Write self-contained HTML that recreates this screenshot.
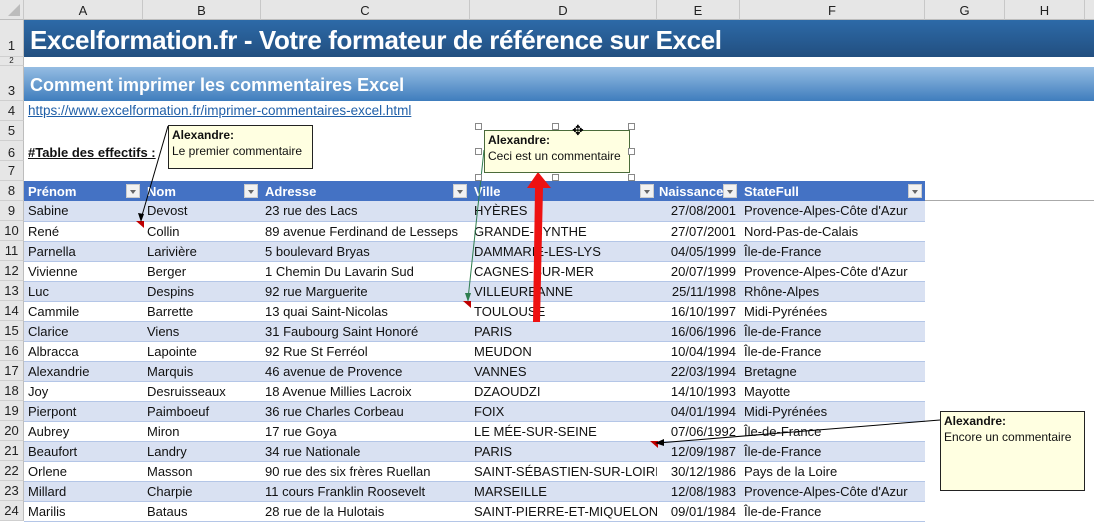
<!DOCTYPE html>
<html><head><meta charset="utf-8"><style>
*{margin:0;padding:0;box-sizing:border-box}
body{width:1094px;height:509px;overflow:hidden;background:#fff;font-family:"Liberation Sans",sans-serif;position:relative}
.ab{position:absolute}
.colh{position:absolute;top:0;height:20px;background:#e6e6e6;border-right:1px solid #c8c8c8;border-bottom:1px solid #bdbdbd;font-size:13px;color:#222;text-align:center;line-height:21px}
.rowh{position:absolute;left:0;width:24px;background:#e6e6e6;border-right:1px solid #bdbdbd;border-bottom:1px solid #cfcfcf;font-size:13px;color:#222;text-align:center}
table{position:absolute;left:24px;top:181px;width:901px;border-collapse:collapse;table-layout:fixed;font-size:13px;color:#111}
td{height:20px;padding:0 0 0 4px;white-space:nowrap;overflow:hidden;border-bottom:1px solid #b4c6e7;position:relative;line-height:19px}
tr.h td{background:#4472c4;color:#fff;font-weight:bold;border-bottom:none}
tr.o td{background:#d9e1f2}
td.r{text-align:right;padding-right:4px}
.dd{position:absolute;right:3px;top:3px;width:14px;height:14px;background:#f2f2f2;border:1px solid #ccc}
.dd:after{content:"";position:absolute;left:3px;top:5px;border-left:3.5px solid transparent;border-right:3.5px solid transparent;border-top:4px solid #666}
.cm{position:absolute;background:#ffffe1;border:1px solid #222;font-size:12px;padding:1px 3px;color:#111;line-height:16px}
.hd{position:absolute;width:7px;height:7px;border:1px solid #888;background:#fff}
</style></head><body>
<div class="colh" style="left:0;width:24px"><div style="position:absolute;right:3px;bottom:3px;border-left:12px solid transparent;border-bottom:12px solid #bcbcbc"></div></div>
<div class="colh" style="left:24px;width:119px">A</div>
<div class="colh" style="left:143px;width:118px">B</div>
<div class="colh" style="left:261px;width:209px">C</div>
<div class="colh" style="left:470px;width:187px">D</div>
<div class="colh" style="left:657px;width:83px">E</div>
<div class="colh" style="left:740px;width:185px">F</div>
<div class="colh" style="left:925px;width:80px">G</div>
<div class="colh" style="left:1005px;width:80px">H</div>
<div class="colh" style="left:1085px;width:20px"></div>

<div class="rowh" style="top:20px;height:37px;line-height:52px">1</div>
<div class="rowh" style="top:57px;height:9px;font-size:8px;line-height:8px">2</div>
<div class="rowh" style="top:66px;height:35px;line-height:50px">3</div>
<div class="rowh" style="top:101px;height:20px;line-height:20px">4</div>
<div class="rowh" style="top:121px;height:20px;line-height:20px">5</div>
<div class="rowh" style="top:141px;height:20px;line-height:24px">6</div>
<div class="rowh" style="top:161px;height:20px;line-height:20px">7</div>
<div class="rowh" style="top:181px;height:20px;line-height:20px">8</div>
<div class="rowh" style="top:201px;height:20px;line-height:20px">9</div>
<div class="rowh" style="top:221px;height:20px;line-height:20px">10</div>
<div class="rowh" style="top:241px;height:20px;line-height:20px">11</div>
<div class="rowh" style="top:261px;height:20px;line-height:20px">12</div>
<div class="rowh" style="top:281px;height:20px;line-height:20px">13</div>
<div class="rowh" style="top:301px;height:20px;line-height:20px">14</div>
<div class="rowh" style="top:321px;height:20px;line-height:20px">15</div>
<div class="rowh" style="top:341px;height:20px;line-height:20px">16</div>
<div class="rowh" style="top:361px;height:20px;line-height:20px">17</div>
<div class="rowh" style="top:381px;height:20px;line-height:20px">18</div>
<div class="rowh" style="top:401px;height:20px;line-height:20px">19</div>
<div class="rowh" style="top:421px;height:20px;line-height:20px">20</div>
<div class="rowh" style="top:441px;height:20px;line-height:20px">21</div>
<div class="rowh" style="top:461px;height:20px;line-height:20px">22</div>
<div class="rowh" style="top:481px;height:20px;line-height:20px">23</div>
<div class="rowh" style="top:501px;height:20px;line-height:20px">24</div>

<div class="ab" style="left:24px;top:20px;width:1070px;height:37px;background:linear-gradient(#2d6aa8,#224f80);color:#fff;font-weight:bold;font-size:26px;line-height:40px;padding-left:6px;letter-spacing:-0.4px">Excelformation.fr - Votre formateur de référence sur Excel</div>
<div class="ab" style="left:24px;top:67px;width:1070px;height:34px;background:linear-gradient(#95bde3,#3f7dbd);color:#fff;font-weight:bold;font-size:18px;line-height:36px;padding-left:6px">Comment imprimer les commentaires Excel</div>
<div class="ab" style="left:28px;top:103px;font-size:13.5px;color:#1f5fa8;text-decoration:underline">https://www.excelformation.fr/imprimer-commentaires-excel.html</div>
<div class="ab" style="left:28px;top:145px;font-size:13px;font-weight:bold;text-decoration:underline;color:#111">#Table des effectifs :</div>
<div class="ab" style="left:925px;top:200px;width:169px;height:1px;background:#aaa"></div>

<table>
<colgroup><col style="width:119px"><col style="width:118px"><col style="width:209px"><col style="width:187px"><col style="width:83px"><col style="width:185px"></colgroup>
<tr class="h"><td>Prénom<span class="dd"></span></td><td>Nom<span class="dd"></span></td><td>Adresse<span class="dd"></span></td><td>Ville<span class="dd"></span></td><td style="padding-left:2px">Naissance<span class="dd"></span></td><td>StateFull<span class="dd"></span></td></tr>
<tr class="o"><td>Sabine</td><td>Devost</td><td>23 rue des Lacs</td><td>HYÈRES</td><td class="r">27/08/2001</td><td>Provence-Alpes-Côte d'Azur</td></tr>
<tr><td>René</td><td>Collin</td><td>89 avenue Ferdinand de Lesseps</td><td>GRANDE-SYNTHE</td><td class="r">27/07/2001</td><td>Nord-Pas-de-Calais</td></tr>
<tr class="o"><td>Parnella</td><td>Larivière</td><td>5 boulevard Bryas</td><td>DAMMARIE-LES-LYS</td><td class="r">04/05/1999</td><td>Île-de-France</td></tr>
<tr><td>Vivienne</td><td>Berger</td><td>1 Chemin Du Lavarin Sud</td><td>CAGNES-SUR-MER</td><td class="r">20/07/1999</td><td>Provence-Alpes-Côte d'Azur</td></tr>
<tr class="o"><td>Luc</td><td>Despins</td><td>92 rue Marguerite</td><td>VILLEURBANNE</td><td class="r">25/11/1998</td><td>Rhône-Alpes</td></tr>
<tr><td>Cammile</td><td>Barrette</td><td>13 quai Saint-Nicolas</td><td>TOULOUSE</td><td class="r">16/10/1997</td><td>Midi-Pyrénées</td></tr>
<tr class="o"><td>Clarice</td><td>Viens</td><td>31 Faubourg Saint Honoré</td><td>PARIS</td><td class="r">16/06/1996</td><td>Île-de-France</td></tr>
<tr><td>Albracca</td><td>Lapointe</td><td>92 Rue St Ferréol</td><td>MEUDON</td><td class="r">10/04/1994</td><td>Île-de-France</td></tr>
<tr class="o"><td>Alexandrie</td><td>Marquis</td><td>46 avenue de Provence</td><td>VANNES</td><td class="r">22/03/1994</td><td>Bretagne</td></tr>
<tr><td>Joy</td><td>Desruisseaux</td><td>18 Avenue Millies Lacroix</td><td>DZAOUDZI</td><td class="r">14/10/1993</td><td>Mayotte</td></tr>
<tr class="o"><td>Pierpont</td><td>Paimboeuf</td><td>36 rue Charles Corbeau</td><td>FOIX</td><td class="r">04/01/1994</td><td>Midi-Pyrénées</td></tr>
<tr><td>Aubrey</td><td>Miron</td><td>17 rue Goya</td><td>LE MÉE-SUR-SEINE</td><td class="r">07/06/1992</td><td>Île-de-France</td></tr>
<tr class="o"><td>Beaufort</td><td>Landry</td><td>34 rue Nationale</td><td>PARIS</td><td class="r">12/09/1987</td><td>Île-de-France</td></tr>
<tr><td>Orlene</td><td>Masson</td><td>90 rue des six frères Ruellan</td><td>SAINT-SÉBASTIEN-SUR-LOIRE</td><td class="r">30/12/1986</td><td>Pays de la Loire</td></tr>
<tr class="o"><td>Millard</td><td>Charpie</td><td>11 cours Franklin Roosevelt</td><td>MARSEILLE</td><td class="r">12/08/1983</td><td>Provence-Alpes-Côte d'Azur</td></tr>
<tr><td>Marilis</td><td>Bataus</td><td>28 rue de la Hulotais</td><td>SAINT-PIERRE-ET-MIQUELON</td><td class="r">09/01/1984</td><td>Île-de-France</td></tr>
</table>

<svg class="ab" style="left:0;top:0" width="1094" height="509">
<polygon points="136,221 144,221 144,228" fill="#c00000"/>
<polygon points="463,301 471,301 471,308" fill="#c00000"/>
<polygon points="650,441 658,441 658,448" fill="#c00000"/>
<line x1="168" y1="126" x2="141" y2="219" stroke="#000" stroke-width="1"/>
<polygon points="141,222 138,213 144,214" fill="#000"/>
<line x1="484" y1="150" x2="468" y2="299" stroke="#2e7d4f" stroke-width="1"/>
<polygon points="468,302 465,293 471,293" fill="#2e7d4f"/>
<line x1="940" y1="420" x2="658" y2="443" stroke="#000" stroke-width="1"/>
<polygon points="655,443 664,439 664,446" fill="#000"/>
<polygon points="533,322 540,322 543,188 551,188 538,172 527,188 535,188" fill="#ee1111"/>
</svg>

<div class="cm" style="left:168px;top:125px;width:145px;height:44px"><b>Alexandre:</b><br>Le premier commentaire</div>
<div class="cm" style="left:484px;top:130px;width:146px;height:43px;border-color:#4b6b3a"><b>Alexandre:</b><br>Ceci est un commentaire</div>
<div class="hd" style="left:475px;top:123px"></div><div class="hd" style="left:552px;top:123px"></div><div class="hd" style="left:628px;top:123px"></div>
<div class="hd" style="left:475px;top:148px"></div><div class="hd" style="left:628px;top:148px"></div>
<div class="hd" style="left:475px;top:174px"></div><div class="hd" style="left:552px;top:174px"></div><div class="hd" style="left:628px;top:174px"></div>
<div class="ab" style="left:572px;top:122px;font-size:14px;color:#000">✥</div>
<div class="cm" style="left:940px;top:411px;width:145px;height:80px"><b>Alexandre:</b><br>Encore un commentaire</div>
</body></html>
